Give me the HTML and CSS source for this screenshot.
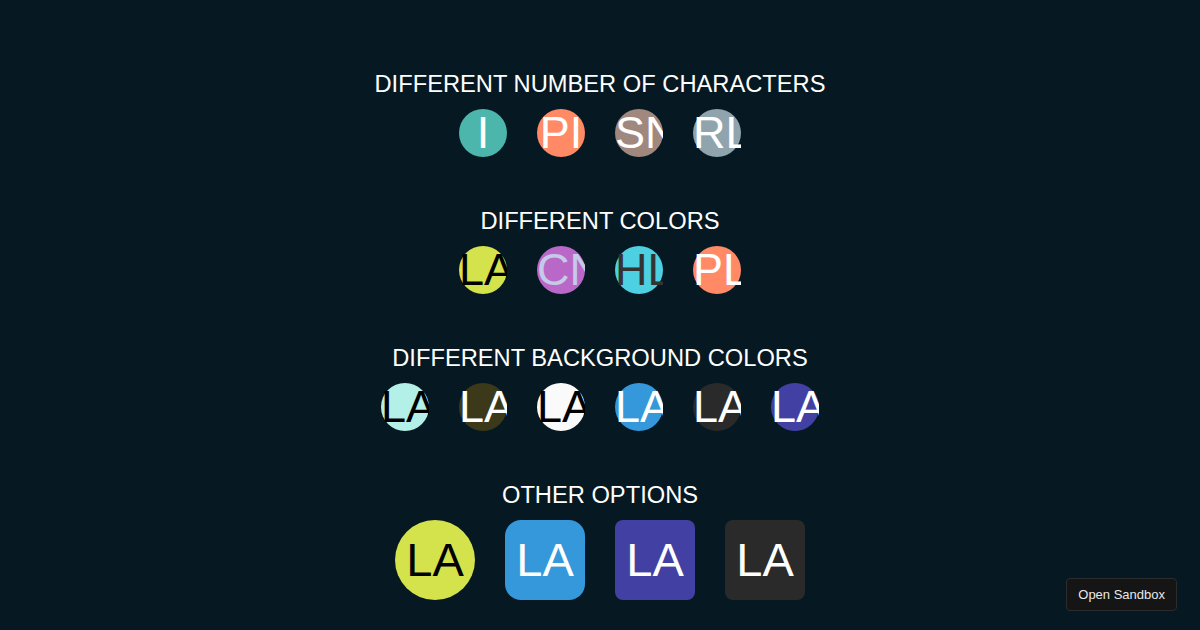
FILE: index.html
```html
<!DOCTYPE html>
<html lang="en">
<head>
<meta charset="utf-8">
<title>Avatars</title>
<link rel="stylesheet" href="styles.css">
</head>
<body>
<main class="page">
  <section class="group">
    <h2 class="title">Different number of characters</h2>
    <div class="row">
      <div class="av bg-teal fg-white"><span>I</span></div>
      <div class="av bg-orange fg-white"><span>PI</span></div>
      <div class="av bg-brown fg-white"><span>SN</span></div>
      <div class="av bg-bluegrey fg-white"><span>RL</span></div>
    </div>
  </section>
  <section class="group">
    <h2 class="title">Different colors</h2>
    <div class="row">
      <div class="av bg-lime fg-black"><span>LA</span></div>
      <div class="av bg-purple fg-lavender"><span>CN</span></div>
      <div class="av bg-cyan fg-dark"><span>HL</span></div>
      <div class="av bg-orange fg-white"><span>PL</span></div>
    </div>
  </section>
  <section class="group">
    <h2 class="title">Different background colors</h2>
    <div class="row">
      <div class="av bg-mint fg-black"><span>LA</span></div>
      <div class="av bg-olive fg-white"><span>LA</span></div>
      <div class="av bg-white fg-black"><span>LA</span></div>
      <div class="av bg-blue fg-white"><span>LA</span></div>
      <div class="av bg-charcoal fg-white"><span>LA</span></div>
      <div class="av bg-indigo fg-white"><span>LA</span></div>
    </div>
  </section>
  <section class="group">
    <h2 class="title">Other options</h2>
    <div class="row">
      <div class="av lg bg-lime fg-black"><span>LA</span></div>
      <div class="av lg r16 bg-blue fg-white"><span>LA</span></div>
      <div class="av lg r8 bg-indigo fg-white"><span>LA</span></div>
      <div class="av lg r8 bg-charcoal fg-white"><span>LA</span></div>
    </div>
  </section>
</main>
<button class="sandbox" type="button">Open Sandbox</button>
</body>
</html>
```

FILE: styles.css
```css
html, body {
  margin: 0;
  padding: 0;
}

body {
  background: #061922;
  font-family: "Liberation Sans", Arial, sans-serif;
  color: #fff;
  width: 1200px;
  height: 630px;
  overflow: hidden;
}

.page {
  display: flex;
  flex-direction: column;
  align-items: center;
  gap: 50px;
  padding-top: 70px;
}

.group {
  display: flex;
  flex-direction: column;
  align-items: center;
  gap: 11px;
}

.title {
  margin: 0;
  font-size: 23.7px;
  line-height: 28px;
  font-weight: 400;
  text-transform: uppercase;
  color: #fff;
}

.row {
  display: flex;
  gap: 30px;
}

/* Avatar: square clip box, circular (or rounded) background behind the text */
.av {
  position: relative;
  width: 48px;
  height: 48px;
  flex: none;
  overflow: hidden;
  text-align: center;
  white-space: nowrap;
  font-family: "Liberation Sans", Arial, sans-serif;
  font-size: 45px;
  line-height: 48px;
  color: var(--fg);
}

.av::before {
  content: "";
  position: absolute;
  inset: 0;
  border-radius: 50%;
  background: var(--bg);
}

.av span {
  position: relative;
}

.av.lg {
  width: 80px;
  height: 80px;
  font-size: 47px;
  line-height: 80px;
}

.av.r16::before {
  border-radius: 16px;
}

.av.r8::before {
  border-radius: 8px;
}

.bg-teal { --bg: #4db6ac; }
.bg-orange { --bg: #ff8a65; }
.bg-brown { --bg: #a1887f; }
.bg-bluegrey { --bg: #90a4ae; }
.bg-lime { --bg: #d4e34b; }
.bg-purple { --bg: #ba68c8; }
.bg-cyan { --bg: #4dd0e1; }
.bg-mint { --bg: #b2f0e8; }
.bg-olive { --bg: #3b3919; }
.bg-white { --bg: #fafafa; }
.bg-blue { --bg: #3498db; }
.bg-charcoal { --bg: #2a2a2a; }
.bg-indigo { --bg: #4241a3; }

.fg-white { --fg: #ffffff; }
.fg-black { --fg: #000000; }
.fg-lavender { --fg: #c5cae9; }
.fg-dark { --fg: #333333; }

.sandbox {
  position: fixed;
  right: 23px;
  bottom: 19px;
  height: 33px;
  padding: 0 11px;
  background: #151515;
  border: 1px solid #2c2c2c;
  border-radius: 4px;
  color: #e8e8e8;
  font-family: "Liberation Sans", Arial, sans-serif;
  font-size: 13px;
  cursor: pointer;
}
```
